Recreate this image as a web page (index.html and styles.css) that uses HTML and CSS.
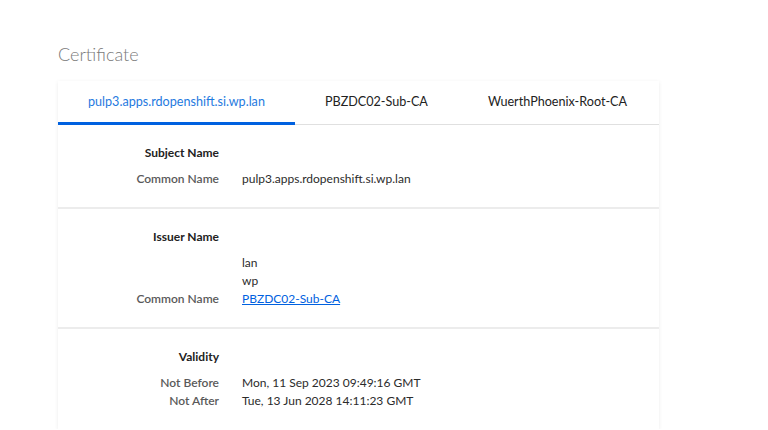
FILE: index.html
```html
<!DOCTYPE html>
<html>
<head>
<meta charset="utf-8">
<link rel="stylesheet" href="styles.css">
</head>
<body>
<main class="page">
  <h1 class="title">Certificate</h1>
  <section class="card">
    <nav class="tabs">
      <div class="tab active">pulp3.apps.rdopenshift.si.wp.lan</div>
      <div class="tab">PBZDC02-Sub-CA</div>
      <div class="tab">WuerthPhoenix-Root-CA</div>
    </nav>
    <div class="info">
      <div class="row head"><span class="label">Subject Name</span><span></span></div>
      <div class="row"><span class="label key">Common Name</span><span class="value">pulp3.apps.rdopenshift.si.wp.lan</span></div>
    </div>
    <div class="info">
      <div class="row head"><span class="label">Issuer Name</span><span></span></div>
      <div class="row"><span class="label key"></span><span class="value">lan</span></div>
      <div class="row"><span class="label key"></span><span class="value">wp</span></div>
      <div class="row"><span class="label key">Common Name</span><span class="value"><a href="#" class="link">PBZDC02-Sub-CA</a></span></div>
    </div>
    <div class="info last">
      <div class="row head"><span class="label">Validity</span><span></span></div>
      <div class="row"><span class="label key">Not Before</span><span class="value">Mon, 11 Sep 2023 09:49:16 GMT</span></div>
      <div class="row"><span class="label key">Not After</span><span class="value">Tue, 13 Jun 2028 14:11:23 GMT</span></div>
    </div>
  </section>
</main>
</body>
</html>
```
FILE: styles.css
```css
html, body {
  margin: 0;
  padding: 0;
  background: #ffffff;
  font-family: Lato, "Noto Sans", sans-serif;
  color: #2b2b2b;
}
.page {
  padding: 41px 0 0 58px;
}
.title {
  margin: 0 0 14px 0;
  font-size: 18px;
  font-weight: 300;
  color: #7a7a7a;
  line-height: 26px;
}
.card {
  width: 601px;
  background: #fff;
  box-shadow: 0 1px 4px rgba(0,0,0,0.08);
}
.tabs {
  display: flex;
  border-bottom: 1px solid #e0e0e0;
}
.tab {
  padding: 0 30px;
  line-height: 42px;
  font-size: 12.6px;
  color: #222;
  white-space: nowrap;
  border-bottom: 3px solid transparent;
  margin-bottom: -1px;
  box-sizing: border-box;
  height: 44px;
}
.tab.active {
  color: #1f7ae0;
  border-bottom-color: #0061e0;
}
.info {
  padding: 18px 0 19px 0;
  border-bottom: 2px solid #ececec;
}
.info.last {
  border-bottom: none;
}
.row {
  display: grid;
  grid-template-columns: 161px 1fr;
  column-gap: 23px;
  font-size: 12px;
  line-height: 18px;
}
.row.head {
  line-height: 20px;
  margin-bottom: 7px;
}
.label {
  text-align: right;
  font-weight: 700;
  color: #222;
}
.label.key {
  font-weight: 600;
  color: #5a5a5a;
}
.value {
  color: #2b2b2b;
}
.link {
  color: #0061e0;
  text-decoration: underline;
}
```
